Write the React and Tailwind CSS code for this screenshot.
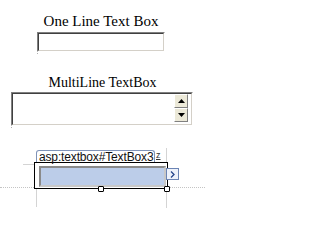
export default function App() {
  const upArrow = (
    <svg width="7" height="4" viewBox="0 0 7 4"><path d="M3.5 0 L7 4 L0 4 Z" fill="#000" /></svg>
  );
  const downArrow = (
    <svg width="7" height="4" viewBox="0 0 7 4"><path d="M0 0 L7 0 L3.5 4 Z" fill="#000" /></svg>
  );
  return (
    <div className="relative w-[205px] h-[226px] overflow-hidden bg-white text-black font-['Liberation_Serif',serif]">
      {/* One line text box */}
      <div className="ml-[37px] w-[128px] pt-[13px]">
        <div className="text-center text-[15px] leading-[17px] whitespace-nowrap">One Line Text Box</div>
        <div className="mt-[2px] h-[20px] border border-t-[#808080] border-l-[#808080] border-r-[#ffffff] border-b-[#ffffff]">
          <div className="h-full border border-t-[#404040] border-l-[#404040] border-r-[#d4d0c8] border-b-[#d4d0c8] bg-white" />
        </div>
      </div>

      {/* Multiline text box */}
      <div className="mt-[23px] text-center text-[14px] leading-[16px] whitespace-nowrap">MultiLine TextBox</div>
      <div className="ml-[11px] mt-[1px] w-[182px] h-[34px] border border-t-[#808080] border-l-[#808080] border-r-[#ffffff] border-b-[#ffffff]">
        <div className="h-full flex justify-end pr-[3px] border border-t-[#404040] border-l-[#404040] border-r-[#d4d0c8] border-b-[#d4d0c8] bg-white">
          <div className="flex flex-col">
            <div className="w-[14px] h-[14px] flex items-center justify-center bg-[#ece9d8] border border-t-[#ffffff] border-l-[#ffffff] border-r-[#808080] border-b-[#808080]">
              {upArrow}
            </div>
            <div className="w-[14px] h-[14px] flex items-center justify-center bg-[#ece9d8] border border-t-[#ffffff] border-l-[#ffffff] border-r-[#808080] border-b-[#808080]">
              {downArrow}
            </div>
          </div>
        </div>
      </div>

      {/* Guide lines (behind selection) */}
      <div className="absolute left-[23px] top-[164px] w-[11px] h-px bg-[#d4d4d4]" />
      <div className="absolute left-0 top-[187px] w-[34px] border-t border-dotted border-[#c4c4c4]" />
      <div className="absolute left-[170px] top-[187px] w-[35px] border-t border-dotted border-[#c4c4c4]" />
      <div className="absolute left-[36px] top-[189px] w-px h-[18px] bg-[#d4d4d4]" />
      <div className="absolute left-[166px] top-[148px] w-px h-[14px] bg-[#d4d4d4]" />
      <div className="absolute left-[166px] top-[192px] w-px h-[16px] bg-[#d4d4d4]" />

      {/* Design-time selected textbox */}
      <div className="relative mt-[24px]">
        <div className="ml-[36px] w-[119px] h-[12px] flex items-center pl-[2px] border border-b-0 border-[#7f93b8] rounded-t-[3px] bg-white font-['Liberation_Sans',sans-serif] text-[12px] leading-[12px] text-[#111] whitespace-nowrap tracking-[-0.15px]">
          asp:textbox#TextBox3
        </div>
        <div className="ml-[34px] w-[134px] h-[27px] border border-black pl-[4px] pt-[3px] pr-[1px] pb-[1px] bg-white">
          <div className="h-full border-2 border-t-[#8a8a8a] border-l-[#8a8a8a] border-r-[#c8c8c8] border-b-[#c8c8c8] bg-[#bccde9]" />
        </div>
      </div>

      {/* overlay glyph after tag */}
      <div className="absolute left-[156px] top-[150px] text-[9px] leading-[10px] font-['Liberation_Sans',sans-serif] text-[#333] underline">z</div>

      {/* Smart tag button */}
      <div className="absolute left-[166px] top-[168px] w-[13px] h-[12px] flex items-center justify-center border border-[#6b84b4] bg-[#eef2fb]">
        <svg width="5" height="7" viewBox="0 0 5 7"><path d="M1 0.5 L4 3.5 L1 6.5" fill="none" stroke="#27468c" strokeWidth="1.3" /></svg>
      </div>

      {/* Handles */}
      <div className="absolute left-[98px] top-[186px] w-[6px] h-[6px] border border-black bg-white rounded-[1px]" />
      <div className="absolute left-[164px] top-[186px] w-[6px] h-[6px] border border-black bg-white rounded-[1px]" />

      {/* faint corner dots */}
      <div className="absolute left-[37px] top-[53px] w-px h-px bg-[#b0b0b0]" />
      <div className="absolute left-[11px] top-[127px] w-px h-px bg-[#b0b0b0]" />
    </div>
  );
}
